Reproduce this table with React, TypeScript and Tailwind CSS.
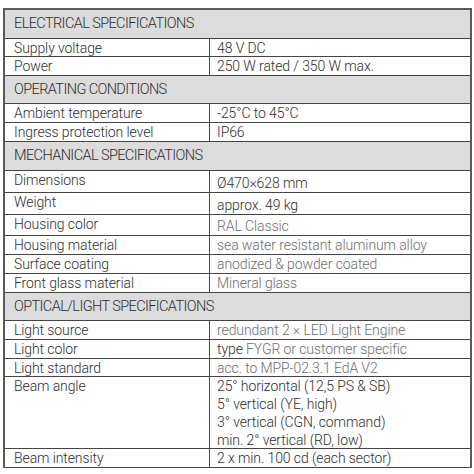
type Row = {
  label: string;
  value: React.ReactNode;
  h: string;
  bottom?: boolean;
};

type Section = {
  title: string;
  h: string;
  rows: Row[];
};

const muted = 'text-[#6e6e6e]';

const sections: Section[] = [
  {
    title: 'ELECTRICAL SPECIFICATIONS',
    h: 'h-[29px]',
    rows: [
      { label: 'Supply voltage', value: '48 V DC', h: 'h-[18px]' },
      { label: 'Power', value: '250 W rated / 350 W max.', h: 'h-[19px]' },
    ],
  },
  {
    title: 'OPERATING CONDITIONS',
    h: 'h-[28px]',
    rows: [
      { label: 'Ambient temperature', value: '-25°C to 45°C', h: 'h-[19px]' },
      { label: 'Ingress protection level', value: 'IP66', h: 'h-[19px]' },
    ],
  },
  {
    title: 'MECHANICAL SPECIFICATIONS',
    h: 'h-[29px]',
    rows: [
      { label: 'Dimensions', value: 'Ø470×628 mm', h: 'h-[22px]', bottom: true },
      { label: 'Weight', value: 'approx. 49 kg', h: 'h-[22px]', bottom: true },
      { label: 'Housing color', value: <span className={muted}>RAL Classic</span>, h: 'h-[21px]', bottom: true },
      { label: 'Housing material', value: <span className={muted}>sea water resistant aluminum alloy</span>, h: 'h-[19px]' },
      { label: 'Surface coating', value: <span className={muted}>anodized &amp; powder coated</span>, h: 'h-[19px]' },
      { label: 'Front glass material', value: <span className={muted}>Mineral glass</span>, h: 'h-[19px]' },
    ],
  },
  {
    title: 'OPTICAL/LIGHT SPECIFICATIONS',
    h: 'h-[28px]',
    rows: [
      { label: 'Light source', value: <span className={muted}>redundant 2 × LED Light Engine</span>, h: 'h-[19px]' },
      {
        label: 'Light color',
        value: (
          <>
            type <span className={muted}>FYGR or customer specific</span>
          </>
        ),
        h: 'h-[19px]',
      },
      { label: 'Light standard', value: <span className={muted}>acc. to MPP-02.3.1 EdA V2</span>, h: 'h-[18px]' },
      {
        label: 'Beam angle',
        value: (
          <>
            <div>25° horizontal (12,5 PS &amp; SB)</div>
            <div>5° vertical (YE, high)</div>
            <div>3° vertical (CGN, command)</div>
            <div>min. 2° vertical (RD, low)</div>
          </>
        ),
        h: 'h-[72px]',
      },
      { label: 'Beam intensity', value: '2 x min. 100 cd (each sector)', h: 'h-[19px]' },
    ],
  },
];

export default function App() {
  return (
    <div
      className="w-[474px] h-[474px] bg-white pt-[8px] pl-[3px] text-[#2e2e2e] text-[14px] leading-[18px] font-light tracking-[-0.1px]"
      style={{ fontFamily: 'Roboto, "Noto Sans", sans-serif' }}
    >
      <div className="w-[469px] border-2 border-b-0 border-[#5a5a5a]">
        {sections.map((s) => (
          <div key={s.title}>
            <div className={`${s.h} flex items-center bg-[#dcdcdc] border-b-[1.5px] border-[#444] pl-[9px] text-[14.5px] tracking-[-0.6px]`}>
              {s.title}
            </div>
            {s.rows.map((r) => (
              <div key={r.label} className={`${r.h} flex border-b-[1.5px] border-[#444]`}>
                <div className="w-[205px] shrink-0 border-r-[1.5px] border-[#444] pl-[9px]">{r.label}</div>
                <div className={`flex-1 pl-[7px] flex flex-col ${r.bottom ? 'justify-end' : 'justify-start'}`}>
                  <div>{r.value}</div>
                </div>
              </div>
            ))}
          </div>
        ))}
      </div>
    </div>
  );
}
